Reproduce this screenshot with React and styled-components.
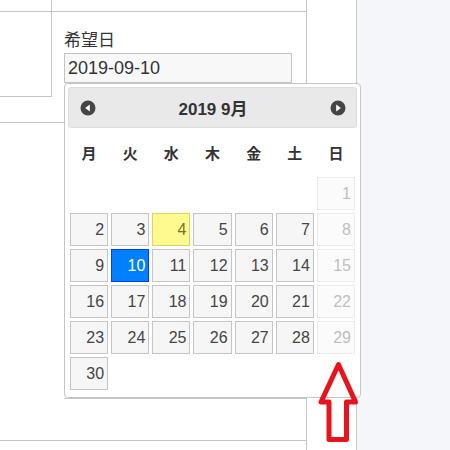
import styled, { createGlobalStyle } from "styled-components"

const GlobalStyle = createGlobalStyle`
    html, body {
        margin: 0;
        padding: 0;
        background: #ffffff;
    }
    * {
        box-sizing: border-box;
    }
`

const Page = styled.div`
    position: relative;
    display: flex;
    width: 450px;
    height: 450px;
    overflow: hidden;
    font-family: "Liberation Sans", "Noto Sans CJK JP", sans-serif;
    color: #333333;
`

const Main = styled.div`
    width: 357px;
    height: 100%;
    background: #ffffff;
    border-right: 1px solid #c6c6c6;
`

const Aside = styled.div`
    flex: 1;
    background: #f5f6fa;
`

const Table = styled.div`
    width: 307px;
    height: 100%;
    border-right: 1px solid #c6c6c6;
    display: grid;
    grid-template-columns: 52px 1fr;
    grid-template-rows: 12px 85px 26px 276px 42px 1fr;
`

const Cell = styled.div`
    position: relative;
    grid-column: ${(props) => props.col};
    grid-row: ${(props) => props.row};
    border-right: ${(props) => (props.divider ? "1px solid #c6c6c6" : "none")};
    border-bottom: ${(props) => (props.ruled ? "1px solid #c6c6c6" : "none")};
`

const FieldCell = styled.div`
    grid-column: 2;
    grid-row: 2;
    padding: 15px 0 0 12px;
`

const Panel = styled.div`
    grid-column: 1 / 3;
    grid-row: 4;
    padding-left: 64px;
`

const PanelBox = styled.div`
    height: 100%;
    border-bottom: 1px solid #c6c6c6;
`

const Label = styled.label`
    display: block;
    font-family: "Noto Sans CJK JP", sans-serif;
    font-size: 17px;
    line-height: 24px;
    white-space: nowrap;
    color: #333333;
`

const InputWrap = styled.div`
    position: relative;
    z-index: 2;
    margin-top: 2px;
    width: 228px;
`

const DateInput = styled.input`
    display: block;
    width: 228px;
    height: 30px;
    margin: 0;
    padding: 0 3px;
    border: 1px solid #c4c4c4;
    border-radius: 0;
    background: #f8f8f8;
    font-family: "Liberation Sans", sans-serif;
    font-size: 18px;
    color: #333333;
    outline: none;
`

const Picker = styled.div`
    position: absolute;
    top: 100%;
    left: 0;
    width: 297px;
    padding: 3px;
    background: #ffffff;
    border: 1px solid #c5c5c5;
    border-radius: 4px;
`

const Header = styled.div`
    height: 41px;
    display: flex;
    align-items: center;
    justify-content: space-between;
    padding: 0 10px 0 11px;
    background: #e9e9e9;
    border: 1px solid #dddddd;
    border-radius: 3px;
`

const Title = styled.div`
    font-size: 17px;
    font-weight: 700;
    color: #333333;
`

const NavIcon = styled.svg`
    width: 16px;
    height: 16px;
    display: block;
`

const Week = styled.div`
    display: grid;
    grid-template-columns: repeat(7, 1fr);
    column-gap: 3px;
    margin: 0 2px;
    height: 49px;
    align-items: center;
`

const WeekDay = styled.div`
    text-align: center;
    font-family: "Noto Sans CJK JP", sans-serif;
    font-size: 15px;
    font-weight: 700;
    color: #333333;
`

const Days = styled.div`
    display: grid;
    grid-template-columns: repeat(7, 1fr);
    grid-auto-rows: 33px;
    gap: 3px;
    margin: 0 2px 4px;
`

const tones = {
    normal: { bg: "#f6f6f6", border: "#c5c5c5", color: "#454545" },
    today: { bg: "#fffa90", border: "#dad55e", color: "#777620" },
    active: { bg: "#007fff", border: "#003eff", color: "#ffffff" },
}

const Day = styled.div`
    display: flex;
    align-items: center;
    justify-content: flex-end;
    padding-right: 3px;
    font-size: 16px;
    background: ${(props) => tones[props.tone].bg};
    border: 1px solid ${(props) => tones[props.tone].border};
    color: ${(props) => tones[props.tone].color};
    opacity: ${(props) => (props.disabled ? 0.35 : 1)};
`

const Arrow = styled.svg`
    position: absolute;
    left: 310px;
    top: 355px;
    width: 60px;
    height: 95px;
    z-index: 3;
`

const weekDays = ["月", "火", "水", "木", "金", "土", "日"]

const Nav = ({ dir }) => (
    <NavIcon viewBox="0 0 16 16">
        <circle cx="8" cy="8" r="7.5" fill="#454545" />
        {dir === "prev" ? (
            <polygon points="9.8,4.6 5.2,8 9.8,11.4" fill="#ffffff" />
        ) : (
            <polygon points="6.2,4.6 10.8,8 6.2,11.4" fill="#ffffff" />
        )}
    </NavIcon>
)

const Calendar = () => {
    const cells = []
    for (let i = 0; i < 6; i++) cells.push(<div key={"e" + i} />)
    for (let d = 1; d <= 30; d++) {
        const sunday = (d + 6) % 7 === 0
        let tone = "normal"
        if (d === 4) tone = "today"
        if (d === 10) tone = "active"
        cells.push(
            <Day key={d} tone={tone} disabled={sunday}>
                {d}
            </Day>
        )
    }
    return (
        <Picker>
            <Header>
                <Nav dir="prev" />
                <Title>2019 9月</Title>
                <Nav dir="next" />
            </Header>
            <Week>
                {weekDays.map((w) => (
                    <WeekDay key={w}>{w}</WeekDay>
                ))}
            </Week>
            <Days>{cells}</Days>
        </Picker>
    )
}

const App = () => {
    return (
        <Page>
            <GlobalStyle />
            <Main>
                <Table>
                    <Cell col="1" row="1" divider ruled />
                    <Cell col="2" row="1" ruled />
                    <Cell col="1" row="2" divider ruled />
                    <FieldCell>
                        <Label>希望日</Label>
                        <InputWrap>
                            <DateInput readOnly value="2019-09-10" />
                            <Calendar />
                        </InputWrap>
                    </FieldCell>
                    <Cell col="1 / 3" row="3" ruled />
                    <Panel>
                        <PanelBox />
                    </Panel>
                    <Cell col="1 / 3" row="5" ruled />
                    <Cell col="1 / 3" row="6" />
                </Table>
            </Main>
            <Aside />
            <Arrow viewBox="310 355 60 95">
                <polygon
                    points="338.5,364.5 321,402 329,402 329,439.5 346.5,439.5 346.5,402 355.5,402"
                    fill="none"
                    stroke="#e8141d"
                    strokeWidth="5"
                    strokeLinejoin="round"
                />
            </Arrow>
        </Page>
    )
}

export default App
